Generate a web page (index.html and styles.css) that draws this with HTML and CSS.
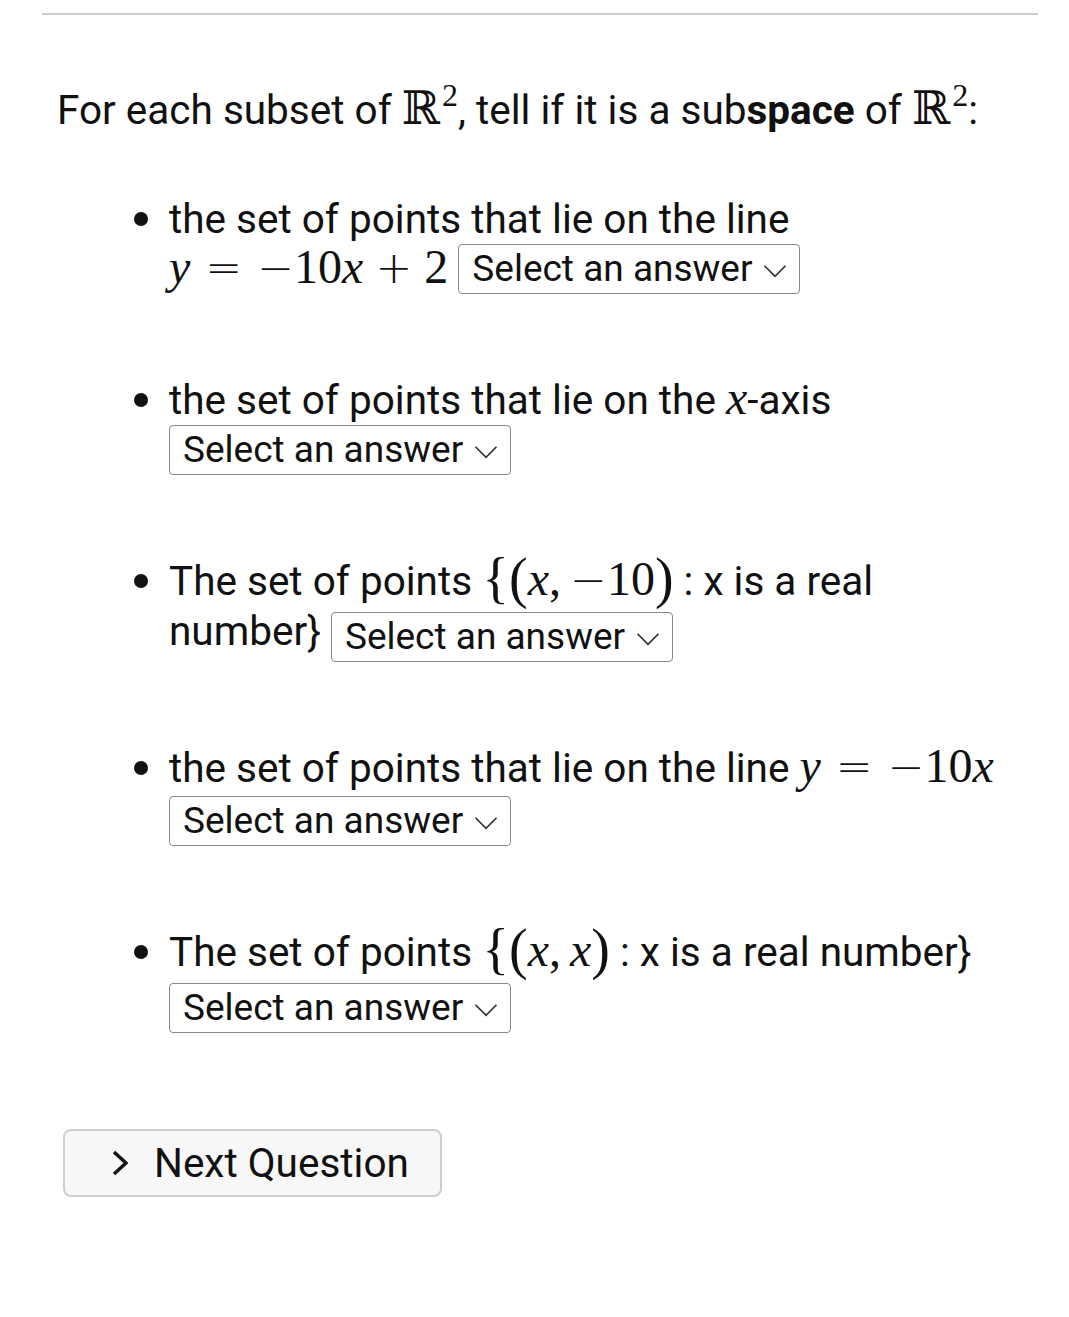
FILE: index.html
```html
<!DOCTYPE html>
<html>
<head>
<meta charset="utf-8">
<link rel="stylesheet" href="styles.css">
</head>
<body>
<div class="page">
  <hr class="rule">
  <p class="intro">For each subset of <span class="math"><span class="bb">ℝ</span><sup>2</sup></span>, tell if it is a sub<b>space</b> of <span class="math"><span class="bb">ℝ</span><sup>2</sup></span>:</p>
  <ul class="items">
    <li>the set of points that lie on the line<br><span class="math"><i>y</i><span class="op rel">=</span><span class="op">−</span>10<i>x</i><span class="op bin">+</span>2</span> <span class="select"><span class="label">Select an answer</span><svg class="chev" viewBox="0 0 26 16"><path d="M1 2 L13 14 L25 2"/></svg></span></li>
    <li>the set of points that lie on the <span class="math"><i>x</i></span>-axis<br><span class="select"><span class="label">Select an answer</span><svg class="chev" viewBox="0 0 26 16"><path d="M1 2 L13 14 L25 2"/></svg></span></li>
    <li>The set of points <span class="math"><span class="big">{(</span><i>x</i>,<span class="sp"></span><span class="op">−</span>10<span class="big">)</span></span> : x is a real<br>number} <span class="select drop-6"><span class="label">Select an answer</span><svg class="chev" viewBox="0 0 26 16"><path d="M1 2 L13 14 L25 2"/></svg></span></li>
    <li>the set of points that lie on the line <span class="math"><i>y</i><span class="op rel">=</span><span class="op">−</span>10<i>x</i></span><br><span class="select drop-3"><span class="label">Select an answer</span><svg class="chev" viewBox="0 0 26 16"><path d="M1 2 L13 14 L25 2"/></svg></span></li>
    <li>The set of points <span class="math"><span class="big">{(</span><i>x</i>,<span class="sp"></span><i>x</i><span class="big">)</span></span> : x is a real number}<br><span class="select drop-6"><span class="label">Select an answer</span><svg class="chev" viewBox="0 0 26 16"><path d="M1 2 L13 14 L25 2"/></svg></span></li>
  </ul>
  <button class="next"><svg class="next-icon" viewBox="0 0 16 26"><path d="M2 2 L14 13 L2 24"/></svg><span>Next Question</span></button>
</div>
</body>
</html>
```
FILE: styles.css
```css
html, body {
  margin: 0;
  padding: 0;
  background: #ffffff;
}
body {
  font-family: Roboto, "Liberation Sans", sans-serif;
  color: #111;
  font-size: 40.5px;
  line-height: 50px;
}
.page {
  padding: 13px 20px 0 42px;
}
.rule {
  border: 0;
  height: 2px;
  background: #cccccc;
  margin: 0;
  width: 996px;
}
.intro {
  margin: 70px 0 0 15px;
  line-height: 50px;
}
.intro b {
  font-weight: 700;
}
.math {
  font-family: "Liberation Serif", "DejaVu Serif", serif;
  font-size: 48px;
  line-height: 0;
  white-space: nowrap;
}
.math i {
  font-style: italic;
}
.op {
  font-family: "DejaVu Sans", "DejaVu Serif", serif;
  font-size: 44px;
  font-weight: 200;
}
.math .bb {
  font-family: "DejaVu Serif", serif;
  font-size: 46px;
}
.math sup {
  font-size: 32px;
  line-height: 0;
  vertical-align: 18px;
  margin-left: 2px;
}
.rel {
  margin: 0 15px;
}
.bin {
  margin: 0 12px;
}
.sp {
  display: inline-block;
  width: 9px;
}
.big {
  font-size: 56px;
  line-height: 0;
  display: inline-block;
  transform: translateY(2px);
}
.items {
  margin: 59px 0 0 0;
  padding-left: 127px;
  list-style: disc;
}
.items li {
  margin-bottom: 81px;
  line-height: 50px;
}
.items li::marker {
  font-size: 46px;
  line-height: 0;
}
.select {
  display: inline-flex;
  align-items: center;
  justify-content: space-between;
  box-sizing: border-box;
  height: 50px;
  width: 342px;
  padding: 0 12px 0 13px;
  border: 1.5px solid #888;
  border-radius: 4px;
  vertical-align: top;
  line-height: 48px;
  white-space: nowrap;
  font-family: Roboto, "Liberation Sans", sans-serif;
  font-size: 37px;
  color: #111;
}
.select.drop-3 {
  margin-top: 3px;
}
.select.drop-6 {
  margin-top: 6px;
}
.label {
  white-space: nowrap;
  flex: none;
}
.chev {
  flex: none;
  width: 24px;
  height: 14px;
  fill: none;
  stroke: #333;
  stroke-width: 2;
  margin-top: 4px;
}
.next {
  display: flex;
  align-items: center;
  box-sizing: border-box;
  width: 379px;
  height: 68px;
  margin: 96px 0 0 21px;
  padding: 0 0 0 47px;
  background: #f7f7f7;
  border: 2px solid #cfcfcf;
  border-radius: 8px;
  font-family: Roboto, "Liberation Sans", sans-serif;
  font-size: 40.5px;
  color: #111;
}
.next-icon {
  width: 16px;
  height: 26px;
  fill: none;
  stroke: #111;
  stroke-width: 3.5;
  margin-right: 26px;
}
```
